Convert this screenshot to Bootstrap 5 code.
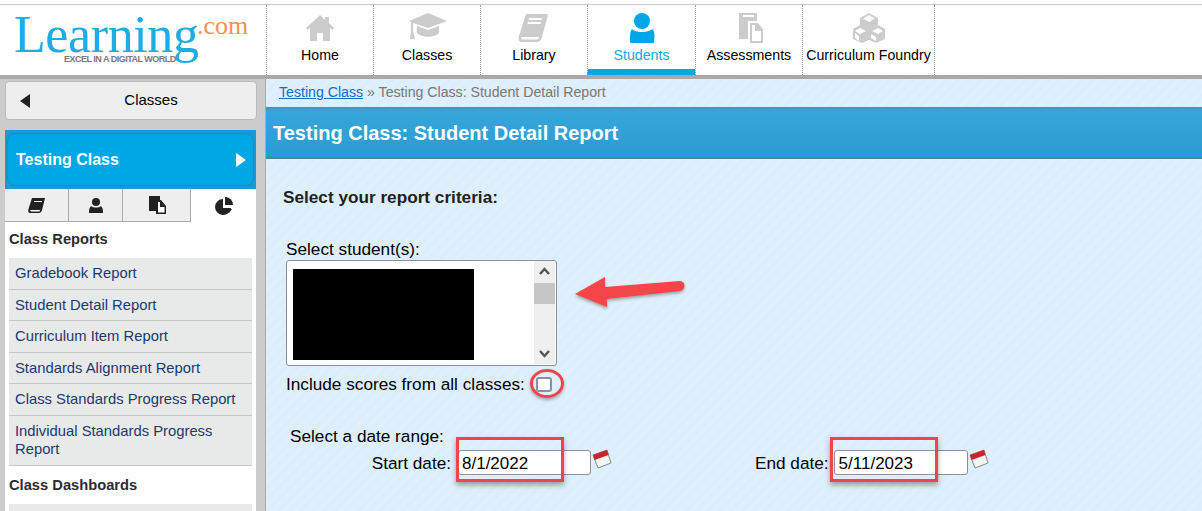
<!DOCTYPE html>
<html lang="en">
<head>
  <meta charset="UTF-8">
  <meta name="viewport" content="width=device-width, initial-scale=1.0">
  <title>Student Detail Report</title>
  <link href="https://cdn.jsdelivr.net/npm/bootstrap@5.3.0/dist/css/bootstrap.min.css" rel="stylesheet">
  <style>
    html, body { height: 511px; overflow: hidden; }
    body { font-family: "Liberation Sans", Arial, sans-serif; font-size: 14px; color: #000; background: #fff; }

    /* header */
    .top-strip { height: 5px; border-bottom: 1px solid #c9c9cf; }
    .app-head { height: 70px; background: #fff; }
    .logo-box { width: 266px; padding: 10px 0 0 14px; position: relative; flex: none; }
    .logo-word { font-family: "Liberation Serif", serif; font-size: 52px; line-height: 40px; color: #1fabe3; letter-spacing: -.4px; }
    .logo-com { font-family: "Liberation Serif", serif; font-size: 26px; color: #f3924f; position: absolute; left: 197px; top: 8px; line-height: 26px; }
    .logo-tag { font-size: 9px; font-weight: 700; color: #77797c; position: absolute; left: 64px; top: 48px; line-height: 12px; letter-spacing: -.5px; white-space: nowrap; }
    .top-tab { width: 107px; height: 70px; border-left: 1px dotted #999; text-align: center; color: #000; text-decoration: none; padding-top: 8px; line-height: 16px; font-size: 14.2px; display: block; white-space: nowrap; }
    .top-tab svg { display: block; margin: 0 auto 4px; height: 30px; width: 44px; }
    .top-tab.wide { width: 133px; border-right: 1px dotted #999; }
    .top-tab.active { width: 108px; color: #19a6e6; border-bottom: 6px solid #00a7e6; }

    .app-body { height: 436px; border-top: 4px solid #a9a9a9; background: #ccc; overflow: hidden; }

    /* left column */
    .side { width: 266px; flex: none; background: #ccc; border-right: 1px solid #a9a9a9; padding: 2px 9px 0 5px; }
    .back-btn { height: 39px; background: #eee; border: 1px solid #b9b9b9; border-radius: 4px; position: relative; text-align: center; line-height: 35px; font-size: 15px; color: #000; width: 252px; padding-left: 40px; }
    .back-btn i { position: absolute; left: 14px; top: 12px; border: 5px solid transparent; border-right: 10px solid #222; border-left: 0; border-top-width: 7px; border-bottom-width: 7px; }
    .class-box { background: #1f97cf; height: 59px; margin-top: 10px; padding: 3px 2px; }
    .class-inner { height: 100%; background: #00a7e5; border: 1px solid #1a8cc4; border-radius: 8px; display: flex; align-items: center; justify-content: space-between; padding: 0 7px 0 8px; color: #fff; font-weight: 700; font-size: 16px; }
    .class-inner i { border-left: 10px solid #fff; border-top: 7px solid transparent; border-bottom: 7px solid transparent; }
    .side-tabs { height: 33px; }
    .side-tab { background: #eee; border-right: 1px solid #aaa; border-bottom: 1px solid #aaa; display: flex; align-items: center; justify-content: center; }
    .side-tab.on { background: #fff; border: 0; }
    .side-panel { background: #fff; height: 289px; padding: 0 4px; overflow: hidden; }
    .side-title { font-weight: 700; font-size: 14.7px; color: #2b2b33; line-height: 16px; }
    .rep-list { margin-top: 11px; }
    .rep-list a { display: block; background: #e8e9e9; color: #1c3a70; text-decoration: none; padding: 6px 6px 0; height: 31.6px; border-bottom: 1px solid #c8c8c8; line-height: 18px; font-size: 14.8px; }
    .rep-list a.two { height: 50px; }
    .rep-stub { height: 20px; background: #e8e9e9; margin-top: 11px; }

    /* main */
    .main-area { position: relative; flex-grow: 1; background: repeating-linear-gradient(135deg, #dcedfb 0, #dcedfb 4px, #e0effc 4px, #e0effc 8px); }
    .crumbs { height: 28px; line-height: 26px; padding-left: 13px; color: #777; font-size: 14.15px; }
    .crumbs a { color: #0e6ed0; }
    .page-bar { height: 52px; background: linear-gradient(#4b8fb1 0, #37a6da 4px, #2a9ad2 100%); border-bottom: 2px solid #5a7f93; color: #fff; font-size: 20px; font-weight: 700; line-height: 53px; padding-left: 7px; }
    .crit { font-weight: 700; font-size: 17.2px; color: #222; margin: 28px 0 0 17px; line-height: 20px; }
    .form-zone { font-size: 17.2px; padding-left: 20px; line-height: 18px; }
    .stu-label { margin-top: 33px; }
    .stu-box { width: 271px; height: 106px; margin-top: 2px; background: #fff; border: 1px solid #8f8f9d; border-radius: 3px; padding: 8px 1px 3px 6px; }
    .black-out { width: 181px; height: 91px; background: #000; }
    .fake-scroll { width: 21px; margin-top: -8px; background: #efefef; position: relative; height: 103px; }
    .fake-scroll b { position: absolute; left: 0; top: 22px; width: 21px; height: 21px; background: #c6c6c6; }
    .fake-scroll svg { position: absolute; left: 4px; width: 13px; height: 9px; }
    .incl { margin-top: 9px; height: 18px; }
    .chk { width: 16px; height: 15px; border: 2px solid #8f8f9d; border-radius: 3px; background: #fff; margin-left: 11px; flex: none; }
    .dates { margin-top: 34px; padding-left: 4px; }
    .date-row { margin-top: 5px; }
    .date-lbl { width: 161px; text-align: right; }
    .date-lbl.end { flex: 0 0 auto; margin-left: 143px; width: auto; }
    .date-in { width: 133px; height: 25px; border: 1px solid #8f8f9d; border-radius: 3px; background: #fff; margin-left: 7px; padding-left: 3px; font-size: 17px; line-height: 25px; }
    .date-in.sec { margin-left: 5px; padding-left: 4px; width: 134px; }
    .cal { width: 20px; height: 22px; margin-left: 1px; margin-top: -8px; }

    /* annotations drawn on top of the screenshot */
    .mark-box { position: absolute; border: 3px solid #f0444a; box-shadow: 0 3px 5px rgba(60,60,60,.45); pointer-events: none; }
    .mark-ring { position: absolute; left: 264px; top: 290px; width: 34px; height: 29px; border: 3px solid #f0444a; border-radius: 50%; box-shadow: 0 2px 3px rgba(60,60,60,.4); }
    .mark-arrow { position: absolute; left: 308px; top: 196px; }
  </style>
</head>
<body>
  <div class="top-strip"></div>
  <div class="app-head d-flex">
    <div class="logo-box">
      <div class="logo-word">Learning</div>
      <div class="logo-com">.com</div>
      <div class="logo-tag">EXCEL IN A DIGITAL WORLD</div>
    </div>
    <a class="top-tab" href="#">
      <svg viewBox="0 0 44 30"><path fill="#ccc" d="M22 2 L8 15 L9 17 L12 15 V28 H19 V20 H25 V28 H32 V15 L35 17 L36 15 L31 10 V4 H27 V6.5 Z"/></svg>
      Home
    </a>
    <a class="top-tab" href="#">
      <svg viewBox="0 0 44 30"><path fill="#ccc" d="M23 0 L42 8 L23 15 L8 10 V18 L10 26 H5 L6 18 V9 L4 8 Z"/><path fill="#ccc" d="M12 13 L23 17 L34 13 V20 C30 25 17 25 12 20 Z"/></svg>
      Classes
    </a>
    <a class="top-tab" href="#">
      <svg viewBox="0 0 44 30"><path fill="#ccc" d="M14 1 H34 L36 2 L30 24 C29 28 27 29 24 29 H10 C7 29 6 27 7 23 Z"/><path fill="#fff" d="M9 24 C9 25.5 10 26.500 11 26.500 H26 L27 24 H11 Z"/><path fill="#fff" d="M17 5 H30 L29.500 7 H16.500 Z M16 9 H29 L28.500 11 H15.500 Z"/></svg>
      Library
    </a>
    <a class="top-tab active" href="#">
      <svg viewBox="0 0 44 30"><circle cx="22" cy="8" r="8" fill="#00a7e6"/><path fill="#00a7e6" d="M12 16 C15 20 29 20 32 16 C36 18 34 28 34 29 C34 30 33 30 32 30 H12 C10 30 10 29 10 28 C10 24 10 18 12 16 Z"/></svg>
      Students
    </a>
    <a class="top-tab" href="#">
      <svg viewBox="0 0 44 30"><path fill="#ccc" d="M12 -1 H30 V8 H21 V26 H12 Z"/><path fill="#fff" d="M16 2 H27 V4 H16 Z"/><path fill="#ccc" d="M23 10 H31 L36 16 V30 H23 Z"/><path fill="#fff" d="M25 12 V28 H34 V18 H28 V12 Z"/></svg>
      Assessments
    </a>
    <a class="top-tab wide" href="#">
      <svg viewBox="0 0 44 30"><path fill="#ccc" d="M22 0 L31 5 V12 L38 16 V26 L29 30 L22 27 L15 30 L6 26 V16 L13 12 V5 Z"/><path fill="#fff" d="M22 2 L28 5.500 L22 9 L16 5.500 Z M13 15 L19 18 L13 21 L8 18 Z M31 15 L36 18 L31 21 L25 18 Z M24 21 L29 24 V28 L24 25 Z M8 20 L12 23 V28 L8 25 Z"/></svg>
      Curriculum Foundry
    </a>
  </div>

  <div class="app-body d-flex">
    <aside class="side">
      <div class="back-btn"><i></i>Classes</div>
      <div class="class-box">
        <div class="class-inner"><span>Testing Class</span><i></i></div>
      </div>
      <div class="side-tabs d-flex">
        <div class="side-tab" style="width:64px">
          <svg width="18" height="15" viewBox="0 0 18 15"><path fill="#222" d="M4 0 H17 L14 12 C13.600 14 12 15 11 15 H2 C0 15 0 13 .5 11 Z"/><path fill="#fff" d="M2 12 H12 L11.600 13.500 H3 Z M6 3 H14 V4 H6 Z"/></svg>
        </div>
        <div class="side-tab" style="width:54px">
          <svg width="14" height="15" viewBox="0 0 14 15"><circle cx="7" cy="4" r="4" fill="#222"/><path fill="#222" d="M2 8 C4 10 10 10 12 8 C14 10 14 13 14 15 H0 C0 13 0 10 2 8 Z"/></svg>
        </div>
        <div class="side-tab" style="width:68px">
          <svg width="18" height="18" viewBox="0 0 18 18"><path fill="#222" d="M1 0 H12 V4 H8 V15 H1 Z"/><path fill="#222" d="M8 4 H13 L18 10 V18 H8 Z"/><path fill="#fff" d="M10 6 V16.500 H16.500 V11 H12 V6 Z"/></svg>
        </div>
        <div class="side-tab on flex-grow-1">
          <svg width="18" height="18" viewBox="0 0 18 18"><path fill="#222" d="M8 2 A8 8 0 1 0 16 11 H8 Z"/><path fill="#222" d="M10 0 A8 8 0 0 1 18 8 H10 Z"/><path fill="#222" d="M11 12 H17 L14 16 Z"/></svg>
        </div>
      </div>
      <div class="side-panel">
        <div class="side-title" style="padding-top:9px;height:25px">Class Reports</div>
        <div class="rep-list">
          <a href="#">Gradebook Report</a>
          <a href="#">Student Detail Report</a>
          <a href="#">Curriculum Item Report</a>
          <a href="#">Standards Alignment Report</a>
          <a href="#">Class Standards Progress Report</a>
          <a class="two" href="#">Individual Standards Progress Report</a>
        </div>
        <div class="side-title" style="margin-top:11px">Class Dashboards</div>
        <div class="rep-stub"></div>
      </div>
    </aside>

    <main class="main-area">
      <div class="crumbs"><a href="#">Testing Class</a> » Testing Class: Student Detail Report</div>
      <div class="page-bar">Testing Class: Student Detail Report</div>
      <div class="crit">Select your report criteria:</div>
      <div class="form-zone">
        <div class="stu-label">Select student(s):</div>
        <div class="stu-box d-flex justify-content-between">
          <div class="black-out"></div>
          <div class="fake-scroll">
            <svg style="top:6px" viewBox="0 0 13 9"><path fill="none" stroke="#555" stroke-width="2.500" d="M2 7 L6.500 2 L11 7"/></svg>
            <b></b>
            <svg style="bottom:6px" viewBox="0 0 13 9"><path fill="none" stroke="#555" stroke-width="2.500" d="M2 2 L6.500 7 L11 2"/></svg>
          </div>
        </div>
        <div class="incl d-flex align-items-center">Include scores from all classes:<span class="chk"></span></div>
        <div class="dates">
          <div>Select a date range:</div>
          <div class="date-row d-flex align-items-center">
            <div class="date-lbl">Start date:</div>
            <div class="date-in">8/1/2022</div>
            <svg class="cal" viewBox="0 0 20 22"><path fill="#f4f4f0" stroke="#888" d="M1 7 L15 2 L19 15 L6 20 Z"/><path fill="#d0202c" d="M1 7 L15 2 L16.500 7 L2.500 12 Z"/></svg>
            <div class="date-lbl end">End date:</div>
            <div class="date-in sec">5/11/2023</div>
            <svg class="cal" viewBox="0 0 20 22"><path fill="#f4f4f0" stroke="#888" d="M1 7 L15 2 L19 15 L6 20 Z"/><path fill="#d0202c" d="M1 7 L15 2 L16.500 7 L2.500 12 Z"/></svg>
          </div>
        </div>
      </div>

      <svg class="mark-arrow" width="115" height="40" viewBox="0 0 115 40">
        <defs><filter id="sh" x="-10%" y="-20%" width="120%" height="150%"><feDropShadow dx="0" dy="2" stdDeviation="1.500" flood-color="#555" flood-opacity=".5"/></filter></defs>
        <path filter="url(#sh)" fill="#f5444a" d="M1 19 L31 2 L31 12 L106 6 C112 6 112 15 106 16 L33 24 L33 32 Z"/>
      </svg>
      <div class="mark-ring"></div>
      <div class="mark-box" style="left:190px;top:358px;width:108px;height:45px"></div>
      <div class="mark-box" style="left:564px;top:358px;width:108px;height:45px"></div>
    </main>
  </div>

  <script src="https://cdn.jsdelivr.net/npm/bootstrap@5.3.0/dist/js/bootstrap.bundle.min.js"></script>
</body>
</html>
